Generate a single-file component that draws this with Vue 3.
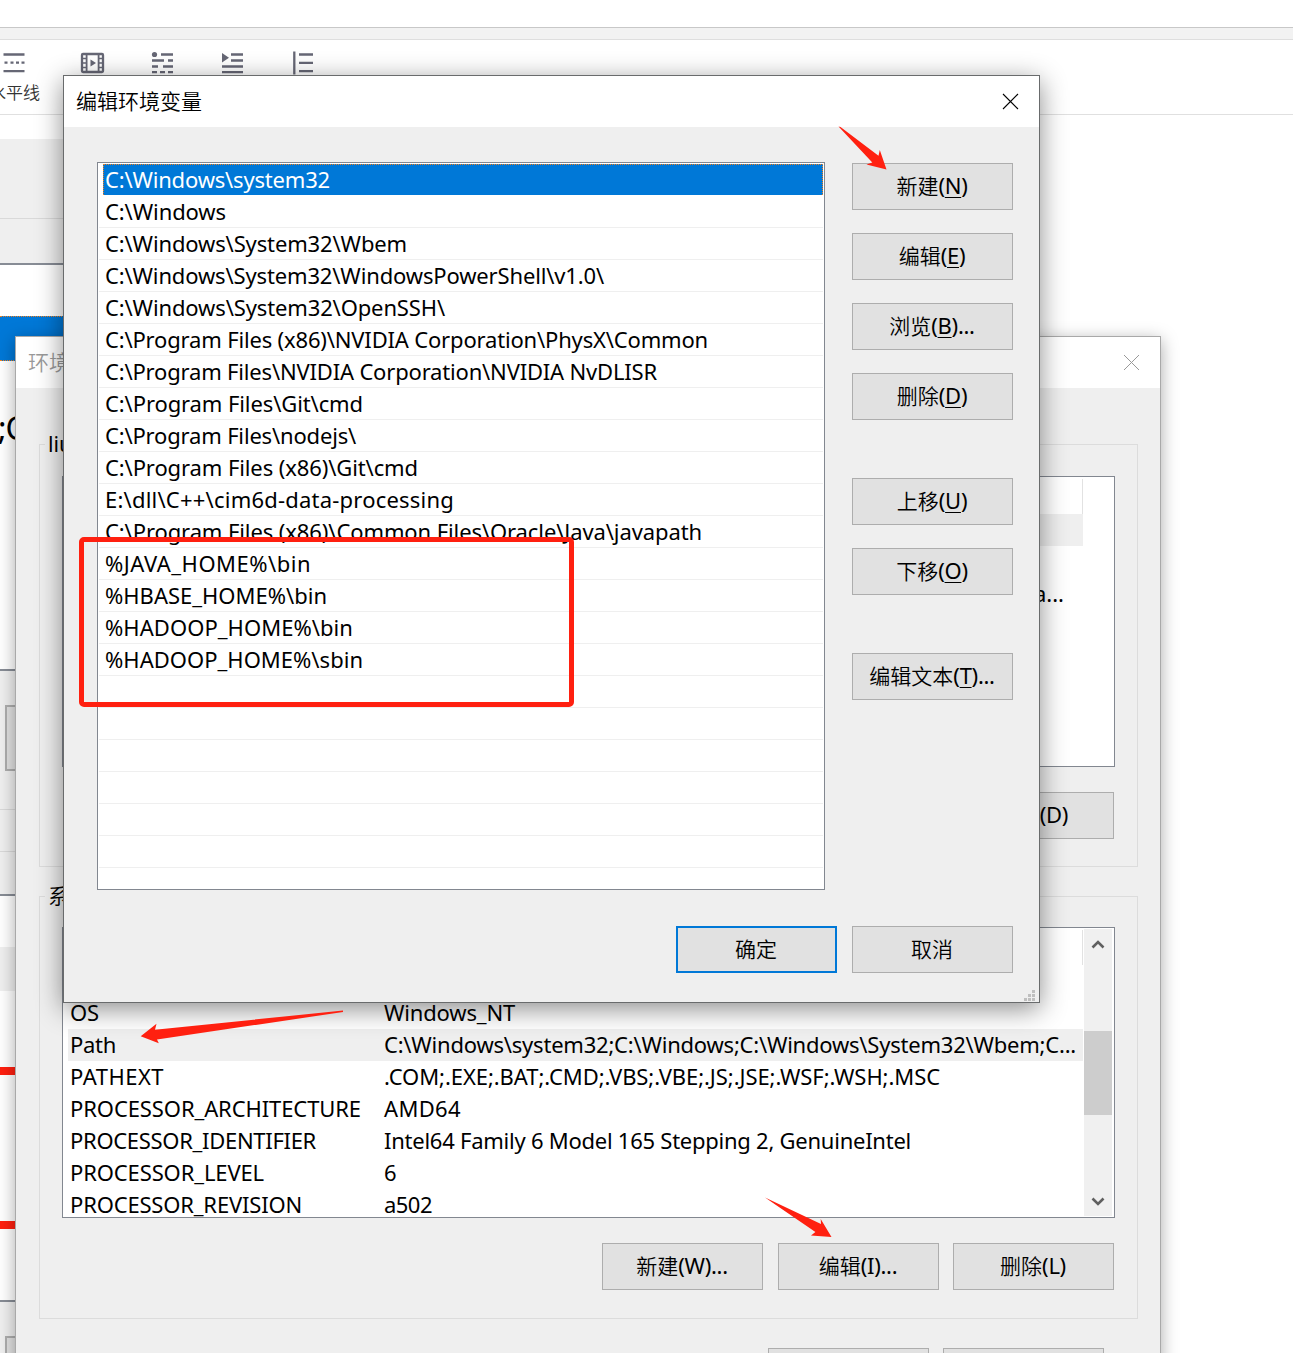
<script setup>
const paths = [
  ['C:\\Windows\\system32', 225],
  ['C:\\Windows', 121],
  ['C:\\Windows\\System32\\Wbem', 302],
  ['C:\\Windows\\System32\\WindowsPowerShell\\v1.0\\', 499],
  ['C:\\Windows\\System32\\OpenSSH\\', 340],
  ['C:\\Program Files (x86)\\NVIDIA Corporation\\PhysX\\Common', 603],
  ['C:\\Program Files\\NVIDIA Corporation\\NVIDIA NvDLISR', 552],
  ['C:\\Program Files\\Git\\cmd', 258],
  ['C:\\Program Files\\nodejs\\', 251],
  ['C:\\Program Files (x86)\\Git\\cmd', 313],
  ['E:\\dll\\C++\\cim6d-data-processing', 349],
  ['C:\\Program Files (x86)\\Common Files\\Oracle\\Java\\javapath', 597],
  ['%JAVA_HOME%\\bin', 206],
  ['%HBASE_HOME%\\bin', 222],
  ['%HADOOP_HOME%\\bin', 248],
  ['%HADOOP_HOME%\\sbin', 258],
  ['', 0], ['', 0], ['', 0], ['', 0], ['', 0], ['', 0],
]
const variables = [
  ['OS', 29, 'Windows_NT', 131],
  ['Path', 46, 'C:\\Windows\\system32;C:\\Windows;C:\\Windows\\System32\\Wbem;C...', 692],
  ['PATHEXT', 94, '.COM;.EXE;.BAT;.CMD;.VBS;.VBE;.JS;.JSE;.WSF;.WSH;.MSC', 556],
  ['PROCESSOR_ARCHITECTURE', 291, 'AMD64', 77],
  ['PROCESSOR_IDENTIFIER', 246, 'Intel64 Family 6 Model 165 Stepping 2, GenuineIntel', 527],
  ['PROCESSOR_LEVEL', 194, '6', 13],
  ['PROCESSOR_REVISION', 232, 'a502', 48],
]
const actions = [
  ['新建', 'N', '', 0], ['编辑', 'E', '', 0], ['浏览', 'B', '...', 0], ['删除', 'D', '', 0],
  ['上移', 'U', '', 1], ['下移', 'O', '', 0],
  ['编辑文本', 'T', '...', 1],
]
const systemActions = [['新建', '(W)...'], ['编辑', '(I)...'], ['删除', '(L)']]
// Spreads the letters of a label over the width given in pixels.
const vFit = {
  mounted(el, { value }) {
    const n = el.textContent.length
    if (n < 2 || !value) return
    const apply = () => {
      el.style.letterSpacing = '0px'
      const w = el.getBoundingClientRect().width
      el.style.letterSpacing = `${(value - w) / n}px`
    }
    apply()
    document.fonts?.ready.then(apply)
  },
}
</script>

<template>
  <div class="desktop">
    <header class="strip"></header>
    <div class="gap"></div>
    <div class="toolbar">
      <svg width="330" height="36" viewBox="0 40 330 36" fill="none" stroke="#666775" stroke-width="2.3">
        <path d="M3.5 54.5h21M3.5 71.2h21" />
        <path d="M4.500 62.700h3M10.500 62.700h3M16 62.700h3M21.500 62.700h3" />
        <rect x="82" y="54" width="21" height="18" rx="1" />
        <path d="M86.600 54v18M98.600 54v18" stroke-width="1.800" />
        <path d="M82 58.500h4M82 63h4M82 67.500h4M99 58.500h4M99 63h4M99 67.500h4" stroke-width="1.600" />
        <path d="M90.500 59.500v7l5.500-3.500z" fill="#666775" stroke="none" />
        <circle cx="154.500" cy="54.500" r="2.600" fill="#666775" stroke="none" />
        <path d="M161 54.500h12M152 60.500h12M168 60.500h5M152 66.500h6M163 66.500h10M152 72.200h5M160 72.200h5M168 72.200h5" />
        <path d="M222 53v9.500l7-4.800z" fill="#666775" stroke="none" />
        <path d="M231 54.500h12M231 60.500h12M222 66.500h21M222 72.200h21" />
        <path d="M294.300 51.500v23M299 54.500h14M299 62.800h14M299 71.200h14" />
      </svg>
      <span class="tool-label">水平线</span>
    </div>

    <div class="behind">
      <div class="b-white" style="height: 24px"></div>
      <div class="b-gray line" style="height: 80px"></div>
      <div class="b-gray dark" style="height: 46px"></div>
      <div class="b-white" style="height: 51px"></div>
      <div class="b-blue"></div>
      <div class="b-white dark b-text" style="height: 310px"><span>;C</span></div>
      <div class="b-gray line pad" style="height: 139px"><i class="stub"></i></div>
      <div class="b-gray line" style="height: 42px"></div>
      <div class="b-gray dark" style="height: 44px"></div>
      <div class="b-white" style="height: 51px"></div>
      <div class="b-gray" style="height: 44px"></div>
      <div class="b-white" style="height: 76px"></div>
      <div class="b-red"></div>
      <div class="b-white" style="height: 146px"></div>
      <div class="b-red"></div>
      <div class="b-white dark" style="height: 73px"></div>
      <div class="b-gray pad" style="height: 60px"><i class="stub"></i></div>
    </div>

    <section class="window parent">
      <div class="title"><span>环境变量</span>
        <svg width="17" height="17" viewBox="0 0 17 17"><path d="M1 1l15 15M16 1L1 16" stroke="#999" stroke-width="1" /></svg>
      </div>
      <div class="group">
        <span class="legend">liu</span>
        <div class="box">
          <div class="cells">
            <div class="head"></div>
            <div class="row sel"></div>
            <div class="row"></div>
            <div class="row end"><span>a...</span></div>
          </div>
        </div>
        <div class="buttons"><button>删除<b>(D)</b></button></div>
      </div>
      <div class="group second">
        <span class="legend">系统</span>
        <div class="box">
          <div class="cells">
            <div class="head"></div>
            <div class="row"></div>
            <div v-for="(v, i) in variables" :key="v[0]" class="row" :class="{ sel: i === 1 }">
              <span class="name"><span v-fit="v[1]">{{ v[0] }}</span></span>
              <span v-fit="v[3]">{{ v[2] }}</span>
            </div>
          </div>
          <div class="scroll">
            <svg width="14" height="10" viewBox="0 0 14 10"><path d="M1.500 8.500L7 3l5.500 5.500" fill="none" stroke="#606060" stroke-width="2.600" /></svg>
            <div class="thumb"></div>
            <svg width="14" height="10" viewBox="0 0 14 10"><path d="M1.500 1.500L7 7l5.500-5.500" fill="none" stroke="#606060" stroke-width="2.600" /></svg>
          </div>
        </div>
        <div class="buttons trio"><button v-for="s in systemActions" :key="s[1]">{{ s[0] }}<b>{{ s[1] }}</b></button></div>
      </div>
      <div class="buttons footer"><button></button><button></button></div>
    </section>

    <section class="window dialog">
      <div class="title"><span>编辑环境变量</span>
        <svg width="17" height="17" viewBox="0 0 17 17"><path d="M1 1l15 15M16 1L1 16" stroke="#000" stroke-width="1.100" /></svg>
      </div>
      <div class="body">
        <div class="list">
          <div v-for="(p, i) in paths" :key="i" class="item" :class="{ active: i === 0 }">
            <span v-fit="p[1]">{{ p[0] }}</span>
          </div>
        </div>
        <div class="side">
          <button v-for="a in actions" :key="a[1]" :class="{ apart: a[3] }">{{ a[0] }}<b>(<u>{{ a[1] }}</u>){{ a[2] }}</b></button>
        </div>
      </div>
      <div class="confirm"><button class="primary">确定</button><button>取消</button></div>
      <svg class="grip" width="12" height="12" viewBox="0 0 12 12" fill="#bfbfbf">
        <path d="M8 0h3v3h-3zM4 4h3v3h-3zM8 4h3v3h-3zM0 8h3v3h-3zM4 8h3v3h-3zM8 8h3v3h-3z" />
      </svg>
    </section>

    <div class="mark"></div>
    <svg class="arrows" width="1293" height="1353" viewBox="0 0 1293 1353" fill="#ff2010">
      <path d="M838.500 126.500L840.500 127L878.500 155.700L879.800 150L886.500 169.500L866.500 164.600L872.300 162.500Z" />
      <path d="M343 1010.500V1012L157 1039.500L158.800 1043.300L140.700 1036.300L156.500 1023.800L155 1029.700Z" />
      <path d="M765 1197.500L821 1224L820.700 1219L831.500 1237L811 1235.500L815.400 1232Z" />
    </svg>
  </div>
</template>

<style>
body { margin: 0; overflow: hidden; }
</style>

<style scoped>
.desktop {
  position: relative;
  width: 1293px;
  height: 1353px;
  overflow: hidden;
  background: #fff;
  color: #000;
  font: 22px/32px "Noto Sans", "Noto Sans CJK SC", sans-serif;
}
.desktop * { box-sizing: border-box; }
.strip { height: 28px; border-bottom: 1px solid #c8c8c8; }
.gap { height: 12px; background: #f2f2f2; border-bottom: 1px solid #dedede; }
.toolbar { height: 75px; border-bottom: 1px solid #e0e0e0; overflow: hidden; }
.toolbar svg { display: block; }
.tool-label { display: block; margin-left: -11px; font: 350 17px/32px "Noto Sans CJK SC", sans-serif; color: #333; }
.behind { width: 70px; }
.b-white { background: #fff; }
.b-gray { background: #efefef; }
.line { border-bottom: 1px solid #d9d9d9; }
.dark { border-bottom: 2px solid #878c95; }
.b-blue { height: 45px; background: #0078d7; border-top: 1px dotted #f08020; border-bottom: 1px dotted #f08020; }
.b-red { height: 8px; background: #ff2010; }
.b-text { padding-top: 45px; font-size: 32px; line-height: 44px; letter-spacing: -1px; }
.b-text span { margin-left: -2px; }
.pad { padding: 34px 0 0 5px; overflow: hidden; }
.stub { display: block; height: 66px; background: #e1e1e1; border: 2px solid #adadad; }

.window { position: absolute; background: #efefef; }
.title { display: flex; justify-content: space-between; height: 51px; padding: 0 20px 0 12px; background: #fff; align-items: center; font: 350 21px/49px "Noto Sans CJK SC", sans-serif; }
.title span { height: 51px; }
button {
  display: block;
  width: 161px;
  height: 47px;
  padding: 0 1px 2px 0;
  border: 1px solid #adadad;
  border-radius: 0;
  background: #e1e1e1;
  color: #000;
  font: 350 21px/43px "Noto Sans CJK SC", sans-serif;
  text-align: center;
}
button b { font: 400 22px/42px "Noto Sans", sans-serif; letter-spacing: -0.3px; }
u { text-decoration-thickness: 1px; text-underline-offset: 3px; }

.parent { left: 15px; top: 336px; width: 1146px; height: 1100px; border: 1px solid #a9a9a9; box-shadow: 0 4px 16px rgba(0, 0, 0, .34); }
.parent .title { color: #999; }
.group { width: 1099px; height: 423px; margin: 56px 0 0 23px; padding: 0 22px; border: 1px solid #dcdcdc; }
.group.second { margin-top: 29px; }
.legend { display: table; height: 31px; margin: -17px 0 0 -17px; padding: 0 3px; background: #efefef; font-family: "Noto Sans", "Noto Sans CJK SC", sans-serif; font-size: 21.500px; line-height: 31px; }
.second .legend { margin-top: -18px; font-weight: 350; font-family: "Noto Sans CJK SC", sans-serif; }
.box { display: flex; width: 1053px; height: 291px; margin-top: 17px; border: 1px solid #828790; background: #fff; overflow: hidden; }
.second .box { margin-top: 17px; }
.cells { width: 1020px; padding: 2px 0 0 5px; flex: none; }
.head { height: 35px; border-right: 1px solid #e2e2e2; }
.row { display: flex; height: 32px; padding-left: 2px; line-height: 30px; white-space: pre; }
.sel { background: #efefef; }
.end { justify-content: flex-end; padding-right: 19px; }
.name { width: 314px; flex: none; }
.scroll { display: flex; flex-direction: column; align-items: center; width: 28px; margin: 1px 0 1px 1px; padding: 10px 0 9px; background: #f0f0f0; }
.thumb { width: 28px; height: 84px; margin: 82px 0 auto; background: #cdcdcd; }
.buttons { display: flex; justify-content: flex-end; gap: 14px; margin-top: 25px; padding-right: 1px; }
.trio button:nth-child(2) { margin-left: 1px; }
.footer { margin-top: 29px; padding-right: 56px; }

.dialog { left: 63px; top: 75px; width: 977px; height: 928px; border: 1px solid #696b6c; box-shadow: 0 6px 25px rgba(0, 0, 0, .45); }
.body { display: flex; gap: 27px; padding: 35px 0 0 33px; }
.list { width: 728px; height: 728px; padding: 1px 1px 0; border: 1px solid #828790; background: #fff; overflow: hidden; }
.item { height: 32px; padding-left: 6px; border-bottom: 1px solid #efefef; line-height: 31px; white-space: pre; }
.active { height: 31px; padding-left: 1px; margin: 0 0 1px 4px; border: 1px dotted #f08020; border-bottom: 0; background: #0078d7; color: #fff; line-height: 29px; }
.side { display: flex; flex-direction: column; gap: 23px; padding-top: 1px; }
.side .apart { margin-top: 35px; }
.confirm { display: flex; gap: 15px; justify-content: flex-end; margin-top: 36px; padding-right: 26px; }
.primary { border: 2px solid #0078d7; line-height: 41px; }
.grip { position: absolute; right: 3px; bottom: 0; }
.mark { position: absolute; left: 79px; top: 537px; width: 495px; height: 170px; border: 5px solid #ff2010; border-radius: 5px; }
.arrows { position: absolute; left: 0; top: 0; }
</style>
